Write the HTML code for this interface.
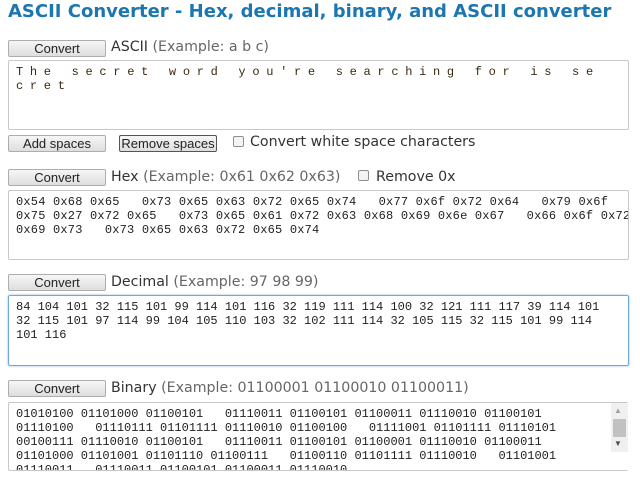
<!DOCTYPE html>
<html><head><meta charset="utf-8"><style>
body{margin:0;width:640px;height:479px;overflow:hidden;background:#fff;font-family:"Liberation Sans",Arial,sans-serif;position:relative}
.a{position:absolute}
h1{position:absolute;left:8px;top:0;margin:0;font-family:"DejaVu Sans",sans-serif;font-size:18px;font-weight:bold;color:#1c76b0;line-height:24px;white-space:nowrap}
.btn{position:absolute;height:17px;border:1px solid #adadad;background:linear-gradient(#f6f6f6,#dedede);font-size:13px;line-height:15px;text-align:center;color:#222;box-sizing:border-box;border-radius:2px}
.lbl{position:absolute;font-family:"DejaVu Sans",sans-serif;font-size:14.2px;color:#333;line-height:18px;white-space:nowrap}
.lbl span{color:#666}
.ta{position:absolute;left:8px;width:621px;border:1px solid #c8c8c8;box-sizing:border-box;border-radius:2px;font-family:"Liberation Mono",monospace;font-size:12px;line-height:14px;color:#222;padding:4px 7px;white-space:pre;overflow:hidden}
.cb{position:absolute;width:11px;height:11px;border:1px solid #8f8f8f;background:#f4f4f4;border-radius:2px;box-sizing:border-box}
</style></head><body>
<h1>ASCII Converter - Hex, decimal, binary, and ASCII converter</h1>

<div class="btn" style="left:8px;top:40px;width:98px">Convert</div>
<div class="lbl" style="left:111px;top:38px">ASCII <span>(Example: a b c)</span></div>
<div class="ta" style="top:60px;height:70px;letter-spacing:6.7px;color:#3a2a10">The secret word you're searching for is se
cret</div>

<div class="btn" style="left:8px;top:135px;width:98px">Add spaces</div>
<div class="btn" style="left:119px;top:135px;width:98px;border-color:#555">Remove spaces</div>
<div class="cb" style="left:233px;top:136px"></div>
<div class="lbl" style="left:250px;top:133px">Convert white space characters</div>

<div class="btn" style="left:8px;top:169px;width:98px">Convert</div>
<div class="lbl" style="left:111px;top:168px">Hex <span>(Example: 0x61 0x62 0x63)</span></div>
<div class="cb" style="left:358px;top:170px"></div>
<div class="lbl" style="left:376px;top:168px">Remove 0x</div>
<div class="ta" style="top:190px;height:70px;letter-spacing:0.2px">0x54 0x68 0x65   0x73 0x65 0x63 0x72 0x65 0x74   0x77 0x6f 0x72 0x64   0x79 0x6f
0x75 0x27 0x72 0x65   0x73 0x65 0x61 0x72 0x63 0x68 0x69 0x6e 0x67   0x66 0x6f 0x72
0x69 0x73   0x73 0x65 0x63 0x72 0x65 0x74</div>

<div class="btn" style="left:8px;top:274px;width:98px">Convert</div>
<div class="lbl" style="left:111px;top:273px">Decimal <span>(Example: 97 98 99)</span></div>
<div class="ta" style="top:295px;height:71px;border-color:#6fa8e0;box-shadow:0 0 2px #8ab8ea">84 104 101 32 115 101 99 114 101 116 32 119 111 114 100 32 121 111 117 39 114 101
32 115 101 97 114 99 104 105 110 103 32 102 111 114 32 105 115 32 115 101 99 114
101 116</div>

<div class="btn" style="left:8px;top:380px;width:98px">Convert</div>
<div class="lbl" style="left:111px;top:379px">Binary <span>(Example: 01100001 01100010 01100011)</span></div>
<div class="ta" style="top:402px;height:69px;width:620px;padding-right:22px">01010100 01101000 01100101   01110011 01100101 01100011 01110010 01100101
01110100   01110111 01101111 01110010 01100100   01111001 01101111 01110101
00100111 01110010 01100101   01110011 01100101 01100001 01110010 01100011
01101000 01101001 01101110 01100111   01100110 01101111 01110010   01101001
01110011   01110011 01100101 01100011 01110010</div>
<div class="a" style="left:611px;top:403px;width:17px;height:67px;background:#f0f0f0"></div>
<div class="a" style="left:614px;top:406px;font-size:8px;color:#a0a0a0">▲</div>
<div class="a" style="left:613px;top:419px;width:13px;height:18px;background:#c1c1c1"></div>
<div class="a" style="left:614px;top:439px;font-size:8px;color:#505050">▼</div>
<div class="a" style="left:611px;top:452px;width:17px;height:18px;background:#fff"></div>
</body></html>
